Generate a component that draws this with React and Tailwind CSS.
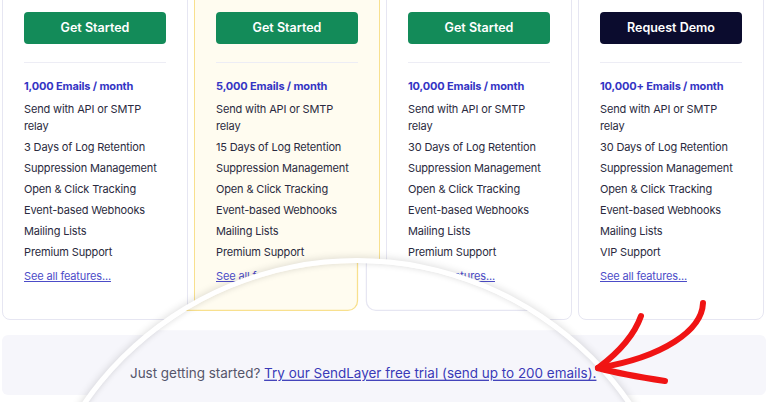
import React from 'react';

const plans = [
  {
    cta: 'Get Started',
    dark: false,
    featured: false,
    volume: '1,000 Emails / month',
    features: ['Send with API or SMTP relay', '3 Days of Log Retention', 'Suppression Management', 'Open & Click Tracking', 'Event-based Webhooks', 'Mailing Lists', 'Premium Support'],
  },
  {
    cta: 'Get Started',
    dark: false,
    featured: true,
    volume: '5,000 Emails / month',
    features: ['Send with API or SMTP relay', '15 Days of Log Retention', 'Suppression Management', 'Open & Click Tracking', 'Event-based Webhooks', 'Mailing Lists', 'Premium Support'],
  },
  {
    cta: 'Get Started',
    dark: false,
    featured: false,
    volume: '10,000 Emails / month',
    features: ['Send with API or SMTP relay', '30 Days of Log Retention', 'Suppression Management', 'Open & Click Tracking', 'Event-based Webhooks', 'Mailing Lists', 'Premium Support'],
  },
  {
    cta: 'Request Demo',
    dark: true,
    featured: false,
    volume: '10,000+ Emails / month',
    features: ['Send with API or SMTP relay', '30 Days of Log Retention', 'Suppression Management', 'Open & Click Tracking', 'Event-based Webhooks', 'Mailing Lists', 'VIP Support'],
  },
];

function PlanCard({ plan }) {
  return (
    <div
      className={`w-[186px] h-[332px] shrink-0 rounded-lg border px-[21px] pt-[23px] ${
        plan.featured ? 'bg-[#fffcf0] border-[#f8e08e]' : 'bg-white border-[#e6e6f2]'
      }`}
    >
      <button
        className={`w-full h-[32px] rounded-[4px] text-white text-[12.5px] font-semibold ${
          plan.dark ? 'bg-[#0b0c2e]' : 'bg-[#138b59]'
        }`}
      >
        {plan.cta}
      </button>
      <div className="mt-[18px] h-px bg-[#ededf5]"></div>
      <p className="mt-[15px] text-[11px] tracking-[-0.15px] leading-[17px] font-bold text-[#3434c4]">{plan.volume}</p>
      <ul className="mt-[6px] flex flex-col gap-[4px] text-[11px] tracking-[-0.15px] leading-[17px] text-[#2a2a40]">
        {plan.features.map((f) => (
          <li key={f}>{f}</li>
        ))}
      </ul>
      <a className="block mt-[7px] text-[11px] tracking-[-0.15px] leading-[17px] text-[#4c4cc8] underline">See all features...</a>
    </div>
  );
}

function Page() {
  return (
    <div className="w-[768px] h-[402px] bg-white">
      {/* Plans */}
      <div className="flex gap-[6px] px-[2px] -mt-[12px]">
        {plans.map((p, i) => (
          <PlanCard key={i} plan={p} />
        ))}
      </div>

      {/* Trial bar */}
      <div className="mx-[2px] mt-[15px] h-[60px] rounded-md bg-[#f6f6fb] pt-[27px] text-center text-[10.6px] leading-[16px]">
        <span className="text-[#55556a]">Just getting started? </span>
        <a className="text-[#3a3ab8] underline">Try our SendLayer free trial (send up to 200 emails).</a>
      </div>
    </div>
  );
}

export default function App() {
  return (
    <div className="relative w-[768px] h-[402px] overflow-hidden bg-white" style={{ fontFamily: 'Inter, "Noto Sans", sans-serif' }}>
      <Page />

      {/* Magnifier lens */}
      <div className="absolute left-[28px] top-[263px] w-[658px] h-[658px] rounded-full overflow-hidden bg-white shadow-[0_0_0_5px_#ffffff,0_0_8px_5px_rgba(0,0,0,0.16)]">
        <div className="absolute left-[-28px] top-[-263px] w-[768px] h-[402px] origin-[461px_353px] scale-[1.27]">
          <Page />
        </div>
        <div className="absolute inset-0 rounded-full shadow-[inset_0_0_6px_rgba(0,0,0,0.15)]"></div>
      </div>

      {/* Hand-drawn arrow */}
      <svg className="absolute left-0 top-0" width="768" height="402" viewBox="0 0 768 402" fill="none">
        <g stroke="#f01414" strokeWidth="6" strokeLinecap="round" strokeLinejoin="round">
          <path d="M703 303 C 702 330 664 357 598 368" />
          <path d="M641 316 C 634 336 618 353 598 368" />
          <path d="M598 368 C 620 374 645 378 665 381" />
        </g>
      </svg>
    </div>
  );
}
